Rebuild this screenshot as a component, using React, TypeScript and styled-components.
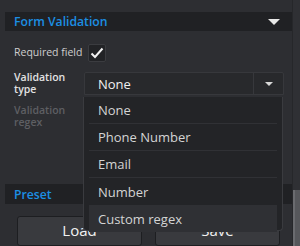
import styled, { createGlobalStyle } from "styled-components";

const EstiloGlobal = createGlobalStyle`
  * { margin: 0; padding: 0; box-sizing: border-box; }
  body {
    background: #2d2e32;
    font-family: "Open Sans", "Noto Sans", sans-serif;
    overflow: hidden;
  }
`;

const Pagina = styled.div`
  display: flex;
  width: 300px;
  height: 246px;
  overflow: hidden;
`;

const Painel = styled.div`
  position: relative;
  width: 292px;
  padding: 12px 0 0 5px;
  display: flex;
  flex-direction: column;
`;

const Cabecalho = styled.div<{ $alt: number }>`
  height: ${(p) => p.$alt}px;
  background: #202124;
  display: flex;
  align-items: center;
  justify-content: space-between;
  padding: 0 12px 0 9px;
  color: #1c8fe3;
  font-size: 12.2px;
  font-weight: 600;
`;

const Seta = styled.span<{ $larg: number; $alt: number; $cor: string }>`
  width: 0;
  height: 0;
  border-left: ${(p) => p.$larg / 2}px solid transparent;
  border-right: ${(p) => p.$larg / 2}px solid transparent;
  border-top: ${(p) => p.$alt}px solid ${(p) => p.$cor};
`;

const Linha = styled.div<{ $alt: number }>`
  display: flex;
  align-items: center;
  height: ${(p) => p.$alt}px;
  padding-left: 9px;
`;

const Rotulo = styled.div<{ $apagado?: boolean; $forte?: boolean }>`
  width: 70px;
  font-size: 10.5px;
  line-height: 11.5px;
  white-space: nowrap;
  font-weight: ${(p) => (p.$forte ? 600 : 400)};
  color: ${(p) => (p.$apagado ? "#5e5f63" : p.$forte ? "#e2e2e2" : "#cfcfcf")};
`;

const Caixa = styled.div`
  width: 18px;
  height: 18px;
  margin-left: 4px;
  background: #222326;
  border: 1px solid #3b3c40;
  border-radius: 2px;
  display: flex;
  align-items: center;
  justify-content: center;
`;

const Seletor = styled.div`
  width: 200px;
  height: 23px;
  background: #28292c;
  border: 1px solid #37383c;
  border-radius: 2px 2px 0 0;
  display: flex;
  align-items: center;
`;

const ValorSeletor = styled.div`
  flex: 1;
  padding-left: 13px;
  font-size: 13px;
  color: #f0f0f0;
`;

const BotaoSeta = styled.div`
  width: 30px;
  height: 100%;
  border-left: 1px solid #37383c;
  display: flex;
  align-items: center;
  justify-content: center;
`;

const Espaco = styled.div<{ $alt: number }>`
  height: ${(p) => p.$alt}px;
  flex-shrink: 0;
`;

const Botoes = styled.div`
  display: flex;
  gap: 13px;
  padding-left: 12px;
`;

const Botao = styled.div`
  width: 125px;
  height: 30px;
  background: #393a3e;
  border: 1px solid #1d1e21;
  border-radius: 3px;
  color: #f2f2f2;
  font-size: 15px;
  display: flex;
  justify-content: center;
  padding-top: 3px;
`;

const Lista = styled.div`
  position: absolute;
  left: 83px;
  top: 97px;
  width: 200px;
  height: 134px;
  background: #232427;
  border: 1px solid #3a3b3f;
  border-top: none;
  border-radius: 0 0 4px 4px;
  padding: 0 5px;
  display: flex;
  flex-direction: column;
`;

const Item = styled.div<{ $ativo?: boolean; $ultimo?: boolean }>`
  height: 27px;
  flex-shrink: 0;
  display: flex;
  align-items: center;
  padding-left: 9px;
  font-size: 13px;
  color: #d4d4d4;
  background: ${(p) => (p.$ativo ? "#2f3034" : "transparent")};
  border-bottom: ${(p) => (p.$ultimo ? "none" : "1px solid #303135")};
`;

const Trilho = styled.div`
  width: 8px;
  background: #2f3034;
  border-left: 1px solid #26272a;
  display: flex;
  flex-direction: column;
  padding-top: 190px;
`;

const Polegar = styled.div`
  flex: 1;
  background: #56575b;
  border-left: 2px solid #6a6b6f;
`;

const opcoes = ["None", "Phone Number", "Email", "Number", "Custom regex"];

export default function App() {
  return (
    <>
      <EstiloGlobal />
      <Pagina>
        <Painel>
          <Cabecalho $alt={21}>
            Form Validation
            <Seta $larg={12} $alt={6} $cor="#e8e8e8" />
          </Cabecalho>
          <Espaco $alt={13} />
          <Linha $alt={18}>
            <Rotulo>Required field</Rotulo>
            <Caixa>
              <svg width="14" height="12" viewBox="0 0 14 12">
                <path d="M1.5 6.5 L5 10 L12.5 1.5" fill="none" stroke="#f2f2f2" strokeWidth="2" />
              </svg>
            </Caixa>
          </Linha>
          <Espaco $alt={10} />
          <Linha $alt={23}>
            <Rotulo $forte>
              Validation
              <br />
              type
            </Rotulo>
            <Seletor>
              <ValorSeletor>None</ValorSeletor>
              <BotaoSeta>
                <Seta $larg={8} $alt={4} $cor="#d8d8d8" />
              </BotaoSeta>
            </Seletor>
          </Linha>
          <Espaco $alt={10} />
          <Linha $alt={23}>
            <Rotulo $apagado $forte>
              Validation
              <br />
              regex
            </Rotulo>
          </Linha>
          <Espaco $alt={56} />
          <Cabecalho $alt={22}>Preset</Cabecalho>
          <Espaco $alt={12} />
          <Botoes>
            <Botao>Load</Botao>
            <Botao>Save</Botao>
          </Botoes>
          <Lista>
            {opcoes.map((o, i) => (
              <Item key={o} $ativo={i === opcoes.length - 1} $ultimo={i >= opcoes.length - 2}>
                {o}
              </Item>
            ))}
          </Lista>
        </Painel>
        <Trilho>
          <Polegar />
        </Trilho>
      </Pagina>
    </>
  );
}
